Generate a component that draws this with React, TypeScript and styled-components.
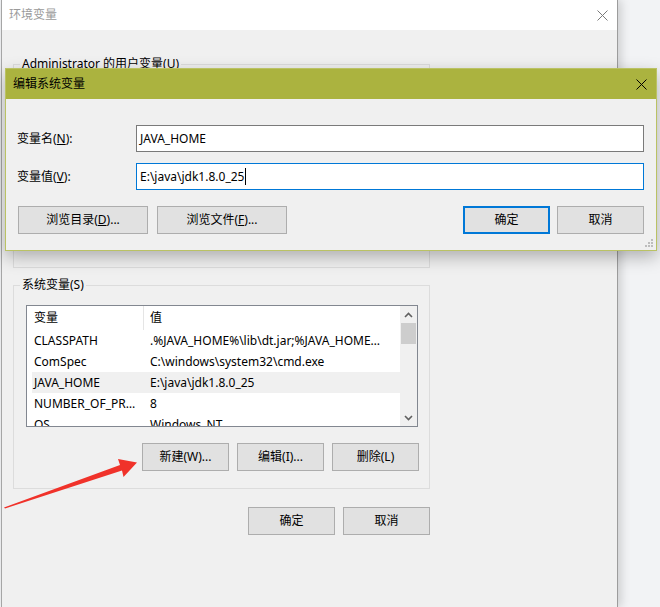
import React from "react";
import styled, { createGlobalStyle } from "styled-components";

const Global = createGlobalStyle`
  html, body { margin: 0; padding: 0; background: #f2f3f5; }
  body {
    font-family: "Noto Sans", "Noto Sans CJK SC", sans-serif;
    font-size: 12px;
    color: #000;
  }
`;

const Desktop = styled.div`
  position: relative;
  width: 660px;
  height: 607px;
  overflow: hidden;
  background: #f2f3f5;
  display: flex;
  padding-left: 1px;
  box-sizing: border-box;
`;

const EnvWindow = styled.div`
  width: 617px;
  height: 607px;
  flex: none;
  box-sizing: border-box;
  background: #f0f0f0;
  border-left: 1px solid #a6a6a6;
  border-right: 1px solid #9c9c9c;
  box-shadow: 3px 0 9px rgba(0, 0, 0, 0.16);
  display: flex;
  flex-direction: column;
`;

const EnvTitleBar = styled.div`
  height: 30px;
  flex: none;
  background: #fff;
  display: flex;
  align-items: center;
  justify-content: space-between;
  padding: 0 9px 0 7px;
  color: #9a9a9a;
  line-height: 16px;
`;

const EnvBody = styled.div`
  display: flex;
  flex-direction: column;
  width: 417px;
  padding-left: 11px;
`;

const Group = styled.div<{ $first?: boolean }>`
  width: 417px;
  height: 204px;
  box-sizing: border-box;
  border: 1px solid #dcdcdc;
  margin-top: ${(p) => (p.$first ? "34px" : "17px")};
  padding: 0 10px 0 12px;
  display: flex;
  flex-direction: column;
`;

const GroupTitle = styled.div`
  align-self: flex-start;
  margin: -9px 0 0 -6px;
  padding: 0 2px;
  line-height: 16px;
  background: #f0f0f0;
`;

const ListView = styled.div`
  margin-top: 12px;
  width: 392px;
  height: 122px;
  box-sizing: border-box;
  border: 1px solid #828790;
  background: #fff;
  display: flex;
  overflow: hidden;
`;

const Table = styled.div`
  flex: 1;
  display: flex;
  flex-direction: column;
  overflow: hidden;
`;

const HeaderRow = styled.div`
  height: 24px;
  flex: none;
  display: flex;
  align-items: center;
`;

const HeaderCell = styled.div<{ $w?: number; $divider?: boolean }>`
  ${(p) => (p.$w ? `width: ${p.$w}px; flex: none;` : "flex: 1;")}
  box-sizing: border-box;
  height: 24px;
  line-height: 24px;
  padding-left: ${(p) => (p.$divider ? "7px" : "6px")};
  border-right: ${(p) => (p.$divider ? "1px solid #e5e5e5" : "none")};
`;

const Row = styled.div<{ $selected?: boolean }>`
  height: 21px;
  flex: none;
  margin-left: 5px;
  display: flex;
  align-items: center;
  background: ${(p) => (p.$selected ? "#f0f0f0" : "transparent")};
`;

const Cell = styled.div<{ $first?: boolean }>`
  ${(p) => (p.$first ? "width: 111px; flex: none; padding: 0 6px 0 2px;" : "flex: 1; padding: 0 10px 0 7px;")}
  box-sizing: border-box;
  min-width: 0;
  white-space: nowrap;
  overflow: hidden;
  text-overflow: ellipsis;
  line-height: 21px;
`;

const ScrollBar = styled.div`
  width: 17px;
  flex: none;
  background: #f0f0f0;
  display: flex;
  flex-direction: column;
`;

const ScrollArrow = styled.div`
  height: 17px;
  flex: none;
  display: flex;
  align-items: center;
  justify-content: center;
`;

const Thumb = styled.div`
  height: 21px;
  flex: none;
  margin: 0 1px;
  background: #cdcdcd;
`;

const Track = styled.div`
  flex: 1;
`;

const ButtonRow = styled.div<{ $top: number }>`
  display: flex;
  justify-content: flex-end;
  gap: 8px;
  margin-top: ${(p) => p.$top}px;
`;

const Button = styled.div<{ $primary?: boolean; $w?: number }>`
  width: ${(p) => p.$w ?? 87}px;
  height: 28px;
  flex: none;
  box-sizing: border-box;
  background: #e1e1e1;
  border: ${(p) => (p.$primary ? "2px solid #0078d7" : "1px solid #adadad")};
  display: flex;
  align-items: center;
  justify-content: center;
  line-height: 16px;
  white-space: nowrap;
`;

const EditWindow = styled.div`
  position: absolute;
  left: 5px;
  top: 68px;
  width: 652px;
  height: 183px;
  box-sizing: border-box;
  background: #f0f0f0;
  border: 1px solid #bac264;
  box-shadow: 0 6px 16px rgba(0, 0, 0, 0.28);
  display: flex;
  flex-direction: column;
`;

const EditTitleBar = styled.div`
  height: 30px;
  flex: none;
  background: #abb33f;
  display: flex;
  align-items: center;
  justify-content: space-between;
  padding: 0 9px 0 7px;
  line-height: 16px;
`;

const EditBody = styled.div`
  padding: 26px 12px 0 11px;
  display: flex;
  flex-direction: column;
`;

const FormGrid = styled.div`
  display: grid;
  grid-template-columns: 119px 1fr;
  row-gap: 11px;
  align-items: center;
`;

const FieldLabel = styled.div`
  line-height: 16px;
`;

const TextBox = styled.div<{ $focused?: boolean }>`
  height: 27px;
  box-sizing: border-box;
  border: 1px solid ${(p) => (p.$focused ? "#0078d7" : "#7a7a7a")};
  background: #fff;
  padding-left: 3px;
  display: flex;
  align-items: center;
  line-height: 16px;
`;

const Caret = styled.span`
  display: inline-block;
  width: 1px;
  height: 17px;
  background: #000;
  margin-left: 1px;
`;

const EditButtons = styled.div`
  margin-top: 16px;
  padding-left: 1px;
  display: flex;
  align-items: center;
`;

const BrowseGroup = styled.div`
  display: flex;
  gap: 9px;
`;

const DialogGroup = styled.div`
  margin-left: auto;
  display: flex;
  gap: 7px;
`;

const Grip = styled.svg`
  position: absolute;
  right: 3px;
  bottom: 3px;
`;

const Overlay = styled.svg`
  position: absolute;
  left: 0;
  top: 0;
  pointer-events: none;
`;

const CloseIcon = ({ color }: { color: string }) => (
  <svg width="11" height="11" viewBox="0 0 11 11">
    <path d="M0.5 0.5 L10.5 10.5 M10.5 0.5 L0.5 10.5" stroke={color} strokeWidth="1" fill="none" />
  </svg>
);

const Chevron = ({ up }: { up?: boolean }) => (
  <svg width="9" height="6" viewBox="0 0 9 6">
    <path
      d={up ? "M1 5 L4.5 1.5 L8 5" : "M1 1 L4.5 4.5 L8 1"}
      stroke="#606060"
      strokeWidth="1.6"
      fill="none"
    />
  </svg>
);

const rows = [
  { name: "CLASSPATH", value: ".%JAVA_HOME%\\lib\\dt.jar;%JAVA_HOME%\\lib\\tools.jar" },
  { name: "ComSpec", value: "C:\\windows\\system32\\cmd.exe" },
  { name: "JAVA_HOME", value: "E:\\java\\jdk1.8.0_25", selected: true },
  { name: "NUMBER_OF_PROCESSORS", value: "8" },
  { name: "OS", value: "Windows_NT" },
];

export default function App() {
  return (
    <>
      <Global />
      <Desktop>
        <EnvWindow>
          <EnvTitleBar>
            <span>环境变量</span>
            <CloseIcon color="#7a7a7a" />
          </EnvTitleBar>
          <EnvBody>
            <Group $first>
              <GroupTitle>Administrator 的用户变量(U)</GroupTitle>
            </Group>
            <Group>
              <GroupTitle>系统变量(S)</GroupTitle>
              <ListView>
                <Table>
                  <HeaderRow>
                    <HeaderCell $w={117} $divider>
                      变量
                    </HeaderCell>
                    <HeaderCell>值</HeaderCell>
                  </HeaderRow>
                  {rows.map((r) => (
                    <Row key={r.name} $selected={r.selected}>
                      <Cell $first>{r.name}</Cell>
                      <Cell>{r.value}</Cell>
                    </Row>
                  ))}
                </Table>
                <ScrollBar>
                  <ScrollArrow>
                    <Chevron up />
                  </ScrollArrow>
                  <Thumb />
                  <Track />
                  <ScrollArrow>
                    <Chevron />
                  </ScrollArrow>
                </ScrollBar>
              </ListView>
              <ButtonRow $top={16}>
                <Button>新建(W)...</Button>
                <Button>编辑(I)...</Button>
                <Button>删除(L)</Button>
              </ButtonRow>
            </Group>
            <ButtonRow $top={18}>
              <Button>确定</Button>
              <Button>取消</Button>
            </ButtonRow>
          </EnvBody>
        </EnvWindow>

        <EditWindow>
          <EditTitleBar>
            <span>编辑系统变量</span>
            <CloseIcon color="#000" />
          </EditTitleBar>
          <EditBody>
            <FormGrid>
              <FieldLabel>
                变量名(<u>N</u>):
              </FieldLabel>
              <TextBox>JAVA_HOME</TextBox>
              <FieldLabel>
                变量值(<u>V</u>):
              </FieldLabel>
              <TextBox $focused>
                E:\java\jdk1.8.0_25
                <Caret />
              </TextBox>
            </FormGrid>
            <EditButtons>
              <BrowseGroup>
                <Button $w={130}>
                  浏览目录(<u>D</u>)...
                </Button>
                <Button $w={130}>
                  浏览文件(<u>F</u>)...
                </Button>
              </BrowseGroup>
              <DialogGroup>
                <Button $primary>确定</Button>
                <Button>取消</Button>
              </DialogGroup>
            </EditButtons>
          </EditBody>
          <Grip width="8" height="8" viewBox="0 0 8 8">
            <g fill="#bdbdbd">
              <rect x="6" y="0" width="2" height="2" />
              <rect x="3" y="3" width="2" height="2" />
              <rect x="6" y="3" width="2" height="2" />
              <rect x="0" y="6" width="2" height="2" />
              <rect x="3" y="6" width="2" height="2" />
              <rect x="6" y="6" width="2" height="2" />
            </g>
          </Grip>
        </EditWindow>

        <Overlay width="660" height="607" viewBox="0 0 660 607">
          <polygon
            points="4,507.5 120,465 118,459 137,462.5 123.5,477 122,470.5 5,508.5"
            fill="#f0322a"
          />
        </Overlay>
      </Desktop>
    </>
  );
}
